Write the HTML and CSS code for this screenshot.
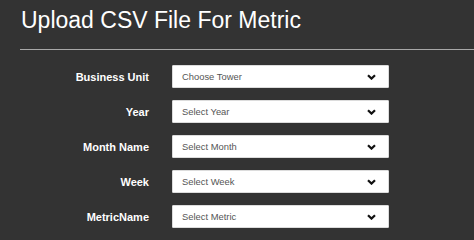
FILE: index.html
```html
<!DOCTYPE html>
<html>
<head>
<meta charset="utf-8">
<link rel="stylesheet" href="styles.css">
</head>
<body>
<div class="page">
  <h1 class="title">Upload CSV File For Metric</h1>
  <div class="rule"></div>
  <form class="form">
    <label class="label">Business Unit</label>
    <div class="select"><span>Choose Tower</span><svg class="chev" width="9" height="6" viewBox="0 0 9 6"><path d="M1 1.2 L4.5 4.6 L8 1.2" fill="none" stroke="#111" stroke-width="2.2"/></svg></div>
    <label class="label">Year</label>
    <div class="select"><span>Select Year</span><svg class="chev" width="9" height="6" viewBox="0 0 9 6"><path d="M1 1.2 L4.5 4.6 L8 1.2" fill="none" stroke="#111" stroke-width="2.2"/></svg></div>
    <label class="label">Month Name</label>
    <div class="select"><span>Select Month</span><svg class="chev" width="9" height="6" viewBox="0 0 9 6"><path d="M1 1.2 L4.5 4.6 L8 1.2" fill="none" stroke="#111" stroke-width="2.2"/></svg></div>
    <label class="label">Week</label>
    <div class="select"><span>Select Week</span><svg class="chev" width="9" height="6" viewBox="0 0 9 6"><path d="M1 1.2 L4.5 4.6 L8 1.2" fill="none" stroke="#111" stroke-width="2.2"/></svg></div>
    <label class="label">MetricName</label>
    <div class="select"><span>Select Metric</span><svg class="chev" width="9" height="6" viewBox="0 0 9 6"><path d="M1 1.2 L4.5 4.6 L8 1.2" fill="none" stroke="#111" stroke-width="2.2"/></svg></div>
  </form>
</div>
</body>
</html>
```
FILE: styles.css
```css
html, body {
  margin: 0;
  padding: 0;
  background: #333333;
  height: 100%;
  overflow: hidden;
}
.page {
  padding: 7px 0 0 20px;
  font-family: "Liberation Sans", Arial, sans-serif;
}
.title {
  margin: 0 0 0 1px;
  font-size: 23px;
  line-height: 26px;
  font-weight: normal;
  color: #ffffff;
}
.rule {
  margin-top: 16px;
  height: 1px;
  background: #a8a8a8;
}
.form {
  margin: 15px 0 0 0;
  display: grid;
  grid-template-columns: 129px 217px;
  grid-auto-rows: 23px;
  column-gap: 23px;
  row-gap: 12px;
  align-items: center;
}
.label {
  text-align: right;
  color: #ffffff;
  font-size: 11px;
  font-weight: bold;
  padding-top: 1px;
}
.select {
  height: 23px;
  box-sizing: border-box;
  background: #ffffff;
  border: 1px solid #dcdcdc;
  border-radius: 1px;
  display: flex;
  align-items: center;
  justify-content: space-between;
  padding: 0 12px 0 9px;
  color: #555555;
  font-size: 9.4px;
}
.chev {
  display: block;
  margin-top: 1px;
}
```
